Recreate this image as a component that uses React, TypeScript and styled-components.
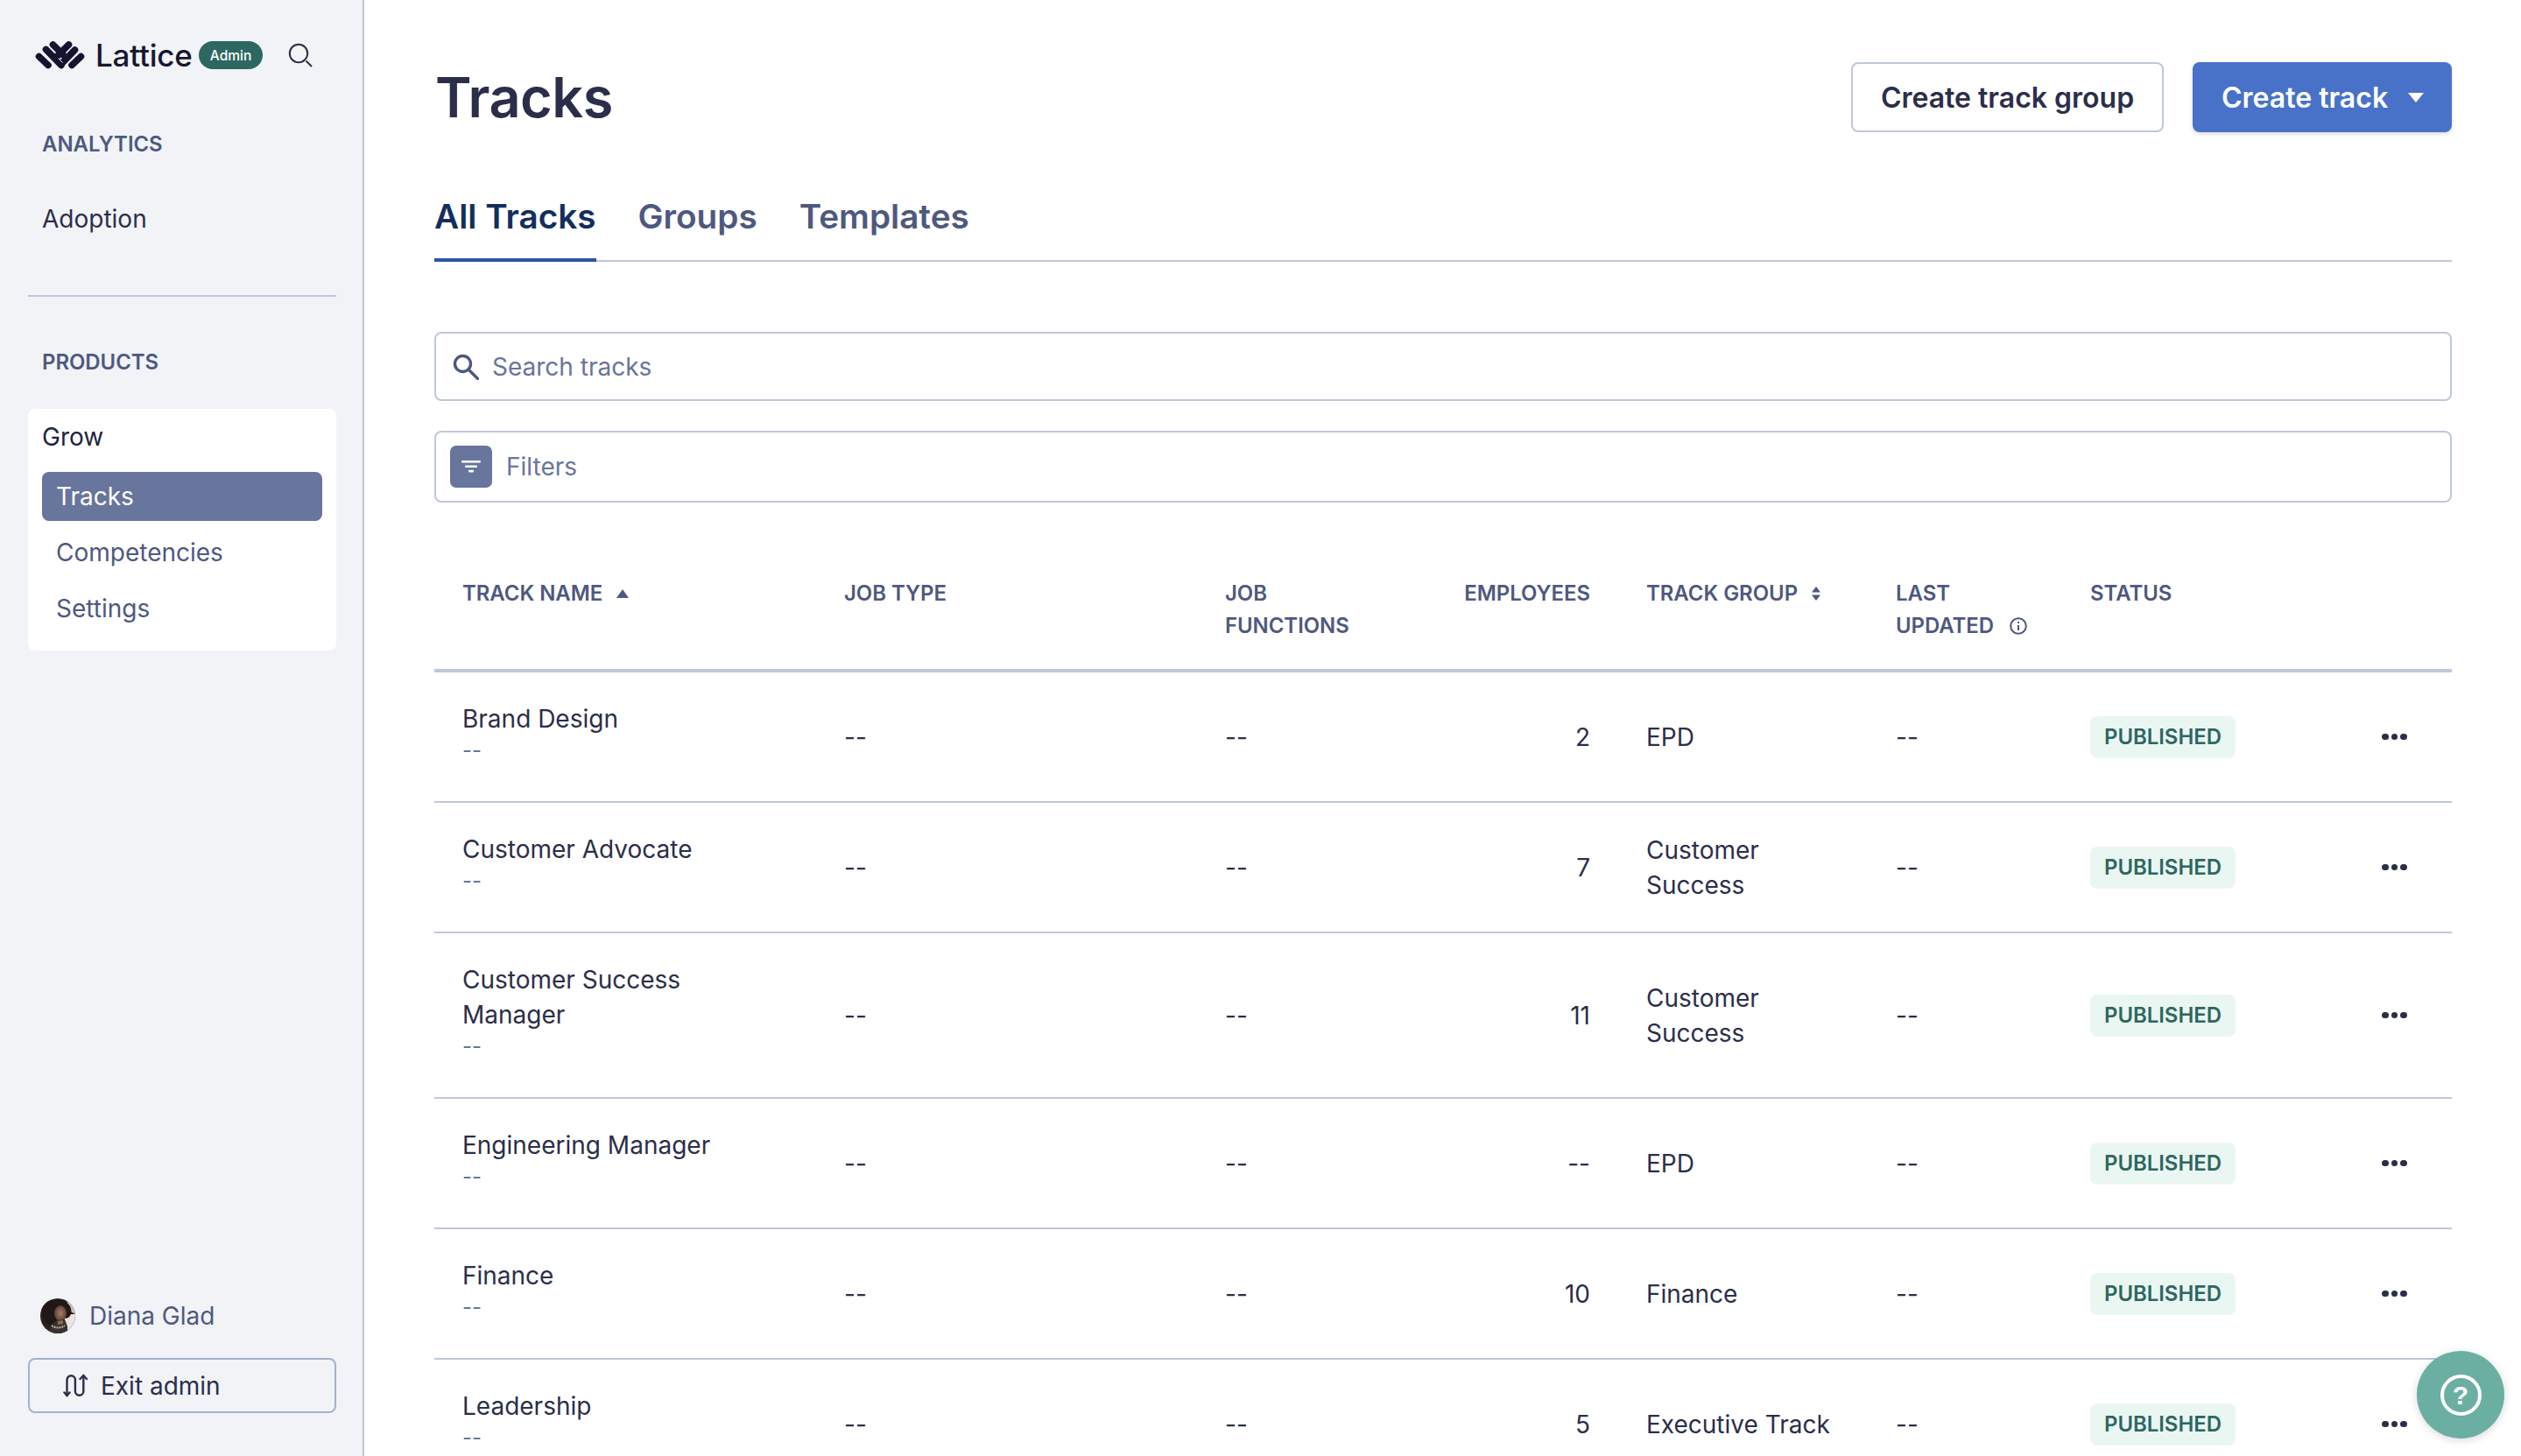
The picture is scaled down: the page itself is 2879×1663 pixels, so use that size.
import React from "react";
import styled, { createGlobalStyle } from "styled-components";

const GlobalStyle = createGlobalStyle`
  html, body { margin: 0; padding: 0; height: 100%; overflow: hidden; background: #fff; }
  body { font-family: "Inter", "Liberation Sans", sans-serif; color: #2b2e4a; }
  * { box-sizing: border-box; }
`;

const Page = styled.div`
  display: flex;
  width: 2879px;
  height: 1663px;
  overflow: hidden;
  position: relative;
`;

const Sidebar = styled.aside`
  flex: 0 0 416px;
  height: 100%;
  display: flex;
  flex-direction: column;
  background: #f1f3f7;
  border-right: 2px solid #bfc7da;
  padding: 47px 30px 49px 32px;
`;

const Brand = styled.div`
  display: flex;
  align-items: center;
  height: 32px;
  margin-left: 8px;
`;

const LogoMark = styled.svg`
  width: 57px;
  height: 32px;
  flex: none;
`;

const LogoText = styled.span`
  margin-left: 12px;
  width: 110px;
  font-size: 35px;
  font-weight: 500;
  color: #17172f;
  letter-spacing: -0.2px;
`;

const AdminBadge = styled.span`
  margin-left: 8px;
  width: 73px;
  height: 32px;
  border-radius: 16px;
  background: #2c6761;
  color: #fff;
  font-size: 15.5px;
  font-weight: 500;
  display: flex;
  align-items: center;
  justify-content: center;
`;

const BrandSearch = styled.svg`
  margin-left: 29px;
  width: 28px;
  height: 28px;
  flex: none;
`;

const SectionLabel = styled.div<{ $top: number }>`
  margin: ${(p) => p.$top}px 0 0 16px;
  font-size: 23.9px;
  line-height: 24px;
  font-weight: 600;
  color: #4e5880;
`;

const AnalyticsLink = styled.div`
  margin: 53px 0 0 16px;
  font-size: 28px;
  line-height: 40px;
  color: #2b2e4a;
`;

const Divider = styled.hr`
  margin: 67px 0 0;
  border: 0;
  height: 2px;
  background: #bfc7da;
`;

const ProductCard = styled.div`
  margin-top: 41px;
  background: #fff;
  border-radius: 8px;
  padding: 12px 16px 20px;
  display: flex;
  flex-direction: column;
  gap: 8px;
`;

const ProductName = styled.div`
  font-size: 28px;
  line-height: 40px;
  color: #1e2340;
  margin-bottom: 12px;
`;

const ProductLink = styled.div<{ $active?: boolean }>`
  height: 56px;
  display: flex;
  align-items: center;
  padding-left: 16px;
  border-radius: 8px;
  font-size: 28px;
  background: ${(p) => (p.$active ? "#68759c" : "transparent")};
  color: ${(p) => (p.$active ? "#fff" : "#4e5880")};
`;

const SidebarFooter = styled.div`
  margin-top: auto;
  display: flex;
  flex-direction: column;
`;

const UserRow = styled.div`
  display: flex;
  align-items: center;
  gap: 16px;
  padding-left: 14px;
  height: 40px;
  font-size: 28px;
  color: #4e5880;
`;

const AvatarSvg = styled.svg`
  width: 40px;
  height: 40px;
  flex: none;
  border-radius: 50%;
`;

const ExitButton = styled.button`
  margin-top: 28px;
  height: 63px;
  border: 2px solid #a4b0cf;
  border-radius: 8px;
  background: transparent;
  display: flex;
  align-items: center;
  gap: 15px;
  padding: 0 0 0 38px;
  font: inherit;
  font-size: 28px;
  color: #2b2e4a;
`;

const ExitIcon = styled.svg`
  width: 28px;
  height: 27px;
  flex: none;
`;

const Main = styled.main`
  flex: 1;
  min-width: 0;
  padding: 71px 79px 0 80px;
`;

const Header = styled.header`
  display: flex;
  align-items: center;
  height: 80px;
`;

const Title = styled.h1`
  margin: 0 auto 0 1px;
  font-size: 63px;
  line-height: 80px;
  font-weight: 600;
  color: #2b2e4a;
  letter-spacing: -0.5px;
`;

const SecondaryButton = styled.button`
  height: 80px;
  width: 357px;
  border: 2px solid #bfc7da;
  border-radius: 8px;
  background: #fff;
  color: #2b2e4a;
  font: inherit;
  font-size: 32px;
  font-weight: 600;
  white-space: nowrap;
`;

const PrimaryButton = styled.button`
  height: 80px;
  width: 296px;
  margin-left: 33px;
  border: 0;
  border-radius: 8px;
  background: #4872c8;
  color: #fff;
  font: inherit;
  font-size: 32px;
  font-weight: 600;
  box-shadow: 0 2px 4px rgba(43, 46, 74, 0.18);
  display: flex;
  align-items: center;
  padding-left: 33px;
  white-space: nowrap;
`;

const Caret = styled.svg`
  width: 18px;
  height: 11px;
  margin-left: 23px;
  flex: none;
`;

const TabBar = styled.nav`
  margin-top: 50px;
  height: 98px;
  display: flex;
  gap: 48px;
  border-bottom: 2px solid #bfc7da;
`;

const Tab = styled.div<{ $active?: boolean }>`
  height: 98px;
  padding-bottom: 3px;
  display: flex;
  align-items: center;
  font-size: 38.7px;
  font-weight: 600;
  white-space: nowrap;
  color: ${(p) => (p.$active ? "#132e5e" : "#4e5880")};
  border-bottom: 4px solid ${(p) => (p.$active ? "#2b55a8" : "transparent")};
`;

const SearchBox = styled.div`
  margin-top: 80px;
  height: 79px;
  border: 2px solid #bfc7da;
  border-radius: 8px;
  display: flex;
  align-items: center;
  padding-left: 19px;
  gap: 15px;
  font-size: 28px;
  color: #68759c;
`;

const SearchIcon = styled.svg`
  width: 30px;
  height: 30px;
  flex: none;
`;

const FilterBox = styled.div`
  margin-top: 34px;
  height: 82px;
  border: 2px solid #bfc7da;
  border-radius: 8px;
  display: flex;
  align-items: center;
  padding-left: 16px;
  gap: 16px;
  font-size: 28px;
  color: #68759c;
`;

const FilterChip = styled.div`
  width: 48px;
  height: 48px;
  border-radius: 7px;
  background: #68759c;
  display: flex;
  align-items: center;
  justify-content: center;
`;

const TableRow = styled.div`
  display: grid;
  grid-template-columns: 436px 435px 273px 144px 349px 222px 1fr 80px;
  padding-left: 32px;
`;

const HeadRow = styled(TableRow)`
  margin-top: 83px;
  height: 111px;
  padding-top: 2px;
  border-bottom: 4px solid #bfc7da;
`;

const HeadCell = styled.div<{ $right?: boolean; $indent?: boolean }>`
  font-size: 23.9px;
  line-height: 37px;
  font-weight: 600;
  color: #4e5880;
  text-align: ${(p) => (p.$right ? "right" : "left")};
  padding-left: ${(p) => (p.$indent ? "64px" : "0")};
`;

const HeadIcon = styled.svg<{ $gap: number }>`
  display: inline-block;
  vertical-align: middle;
  margin-left: ${(p) => p.$gap}px;
  position: relative;
  top: -1px;
`;

const BodyRow = styled(TableRow)`
  border-bottom: 2px solid #bfc7da;
  align-items: center;
  font-size: 28px;
  line-height: 40px;
  color: #2b2e4a;
`;

const NameCell = styled.div`
  align-self: start;
  padding: 33px 40px 42px 0;
`;

const SubText = styled.div`
  font-size: 23.9px;
  line-height: 32px;
  color: #68759c;
`;

const NumberCell = styled.div`
  text-align: right;
`;

const GroupCell = styled.div`
  padding: 0 60px 0 64px;
`;

const Dash = styled.div``;

const StatusBadge = styled.span`
  display: inline-flex;
  align-items: center;
  height: 48px;
  padding: 0 16px;
  border-radius: 8px;
  background: #eaf6f2;
  color: #2c6761;
  font-size: 23.9px;
  font-weight: 600;
`;

const MoreDots = styled.div`
  display: flex;
  gap: 3px;
  justify-content: flex-start;
`;

const Dot = styled.span`
  width: 7.5px;
  height: 7.5px;
  border-radius: 50%;
  background: #2b2e4a;
`;

const HelpBubble = styled.button`
  position: absolute;
  left: 2760px;
  top: 1543px;
  width: 100px;
  height: 100px;
  border: 0;
  border-radius: 50%;
  background: #6bafa3;
  box-shadow: 0 2px 10px rgba(43, 46, 74, 0.18);
  display: flex;
  align-items: center;
  justify-content: center;
  padding: 0;
`;

const HelpRing = styled.span`
  width: 47px;
  height: 47px;
  border: 4px solid #fff;
  border-radius: 50%;
  color: #fff;
  font-size: 30px;
  font-weight: 700;
  line-height: 39px;
  text-align: center;
`;

type Track = { name: string[]; employees: string; group: string[] };

const tracks: Track[] = [
  { name: ["Brand Design"], employees: "2", group: ["EPD"] },
  { name: ["Customer Advocate"], employees: "7", group: ["Customer", "Success"] },
  { name: ["Customer Success", "Manager"], employees: "11", group: ["Customer", "Success"] },
  { name: ["Engineering Manager"], employees: "--", group: ["EPD"] },
  { name: ["Finance"], employees: "10", group: ["Finance"] },
  { name: ["Leadership"], employees: "5", group: ["Executive Track"] },
];

const Lines = ({ parts }: { parts: string[] }) => (
  <>
    {parts.map((part) => (
      <div key={part}>{part}</div>
    ))}
  </>
);

const Avatar = () => (
  <AvatarSvg viewBox="0 0 40 40">
    <defs>
      <radialGradient id="face" cx="0.5" cy="0.5" r="0.5">
        <stop offset="0" stopColor="#a97f68" />
        <stop offset="1" stopColor="#5d4034" />
      </radialGradient>
    </defs>
    <rect width="40" height="40" fill="#2a211e" />
    <rect x="28" y="18" width="12" height="22" fill="#e9e4de" />
    <path d="M30 2 L40 6 V18 L33 14Z" fill="#cfc7bf" />
    <path d="M2 10 C6 0 28 -2 34 9 C38 17 33 25 27 22 L10 30 C3 26 0 18 2 10Z" fill="#1f1816" />
    <ellipse cx="23" cy="17" rx="7" ry="9" fill="url(#face)" />
    <path d="M19 25 L28 24 L31 32 L31 40 H10 L11 33Z" fill="#3a322e" />
    <path d="M13 31 Q20 36 28 31" stroke="#bdb7ad" strokeWidth="2" strokeDasharray="2 1" fill="none" />
    <path d="M20 26 L26 25 L26 29 L20 30Z" fill="#8c6a57" />
  </AvatarSvg>
);

export default function App() {
  return (
    <Page>
      <GlobalStyle />
      <Sidebar>
        <Brand>
          <LogoMark viewBox="0 0 57 32" fill="none" stroke="#14142e" strokeWidth="7.6" strokeLinecap="round">
            <path d="M4.5 17.5 L15 27.5" />
            <path d="M12.5 9.5 L30 27.5" />
            <path d="M20.5 4 L33 16.5" />
            <path d="M38.5 4 L26 16.5" />
            <path d="M45.5 10 L30 26" />
            <path d="M52.5 17.5 L42 27.5" />
            <path d="M26.5 19.5 L31.5 24.5" stroke="#f1f3f7" strokeWidth="1" strokeLinecap="butt" />
          </LogoMark>
          <LogoText>Lattice</LogoText>
          <AdminBadge>Admin</AdminBadge>
          <BrandSearch viewBox="0 0 28 28" fill="none" stroke="#2b2e4a">
            <circle cx="12" cy="12" r="10.2" strokeWidth="2" />
            <path d="M20.5 20.5 L27 27" strokeWidth="2" />
          </BrandSearch>
        </Brand>
        <SectionLabel $top={74}>ANALYTICS</SectionLabel>
        <AnalyticsLink>Adoption</AnalyticsLink>
        <Divider />
        <SectionLabel $top={63}>PRODUCTS</SectionLabel>
        <ProductCard>
          <ProductName>Grow</ProductName>
          <ProductLink $active>Tracks</ProductLink>
          <ProductLink>Competencies</ProductLink>
          <ProductLink>Settings</ProductLink>
        </ProductCard>
        <SidebarFooter>
          <UserRow>
            <Avatar />
            Diana Glad
          </UserRow>
          <ExitButton>
            <ExitIcon viewBox="0 0 28 27" fill="none" stroke="#2b2e4a" strokeWidth="2.4" strokeLinecap="round" strokeLinejoin="round">
              <path d="M4.5 25 V7 a4.7 4.7 0 0 1 9.4 0 V20 a4.7 4.7 0 0 0 9.4 0 V2" />
              <path d="M1.5 21.5 L4.5 25 L7.5 21.5" />
              <path d="M19.5 6 L23.3 2 L27 6" />
            </ExitIcon>
            Exit admin
          </ExitButton>
        </SidebarFooter>
      </Sidebar>
      <Main>
        <Header>
          <Title>Tracks</Title>
          <SecondaryButton>Create track group</SecondaryButton>
          <PrimaryButton>
            Create track
            <Caret viewBox="0 0 18 11" fill="#fff">
              <path d="M0 0 H18 L9 11Z" />
            </Caret>
          </PrimaryButton>
        </Header>
        <TabBar>
          <Tab $active>All Tracks</Tab>
          <Tab>Groups</Tab>
          <Tab>Templates</Tab>
        </TabBar>
        <SearchBox>
          <SearchIcon viewBox="0 0 30 30" fill="none" stroke="#4e5880" strokeWidth="3.4">
            <circle cx="11.5" cy="11.5" r="9" />
            <path d="M18 18 L28.5 28.5" strokeLinecap="round" />
          </SearchIcon>
          Search tracks
        </SearchBox>
        <FilterBox>
          <FilterChip>
            <svg width="22" height="14" viewBox="0 0 22 14" fill="#fff">
              <rect x="0" y="0" width="22" height="2.6" rx="1" />
              <rect x="4" y="5.4" width="14" height="2.6" rx="1" />
              <rect x="8" y="10.8" width="6" height="2.6" rx="1" />
            </svg>
          </FilterChip>
          Filters
        </FilterBox>
        <HeadRow>
          <HeadCell>
            TRACK NAME
            <HeadIcon $gap={16} width="14" height="10" viewBox="0 0 14 10" fill="#4e5880">
              <path d="M7 0 L14 10 H0Z" />
            </HeadIcon>
          </HeadCell>
          <HeadCell>JOB TYPE</HeadCell>
          <HeadCell>
            JOB
            <br />
            FUNCTIONS
          </HeadCell>
          <HeadCell $right>EMPLOYEES</HeadCell>
          <HeadCell $indent>
            TRACK GROUP
            <HeadIcon $gap={16} width="10" height="16" viewBox="0 0 10 16" fill="#4e5880">
              <path d="M5 0 L10 6.5 H0Z M5 16 L0 9.5 H10Z" />
            </HeadIcon>
          </HeadCell>
          <HeadCell>
            LAST
            <br />
            UPDATED
            <HeadIcon $gap={18} width="20" height="20" viewBox="0 0 20 20" fill="none" stroke="#4e5880" strokeWidth="2">
              <circle cx="10" cy="10" r="8.8" />
              <path d="M10 9 V15 M10 5 V7" />
            </HeadIcon>
          </HeadCell>
          <HeadCell>STATUS</HeadCell>
          <div />
        </HeadRow>
        {tracks.map((track) => (
          <BodyRow key={track.name.join(" ")}>
            <NameCell>
              <Lines parts={track.name} />
              <SubText>--</SubText>
            </NameCell>
            <Dash>--</Dash>
            <Dash>--</Dash>
            <NumberCell>{track.employees}</NumberCell>
            <GroupCell>
              <Lines parts={track.group} />
            </GroupCell>
            <Dash>--</Dash>
            <div>
              <StatusBadge>PUBLISHED</StatusBadge>
            </div>
            <MoreDots>
              <Dot />
              <Dot />
              <Dot />
            </MoreDots>
          </BodyRow>
        ))}
      </Main>
      <HelpBubble aria-label="Help">
        <HelpRing>?</HelpRing>
      </HelpBubble>
    </Page>
  );
}
